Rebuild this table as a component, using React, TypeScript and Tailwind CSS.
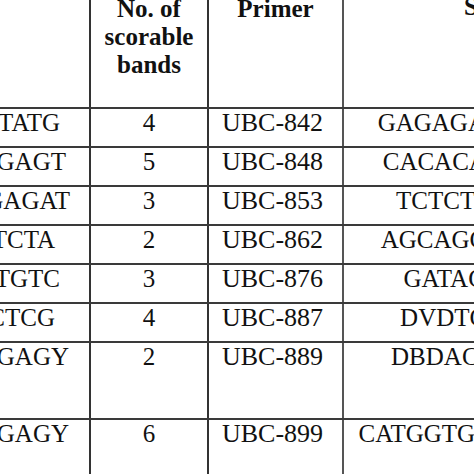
const ROWS = [
  { left: "GTATG", pr: "pr-[29px]", bands: "4", primer: "UBC-842", seq: "GAGAGAGAGAGAGAGAYG", tall: false },
  { left: "AGAGT", pr: "pr-[23px]", bands: "5", primer: "UBC-848", seq: "CACACACACACACACARG", tall: false },
  { left: "AGAGAT", pr: "pr-[19px]", bands: "3", primer: "UBC-853", seq: "TCTCTCTCTCTCTCTCRT", tall: false },
  { left: "CTCTA", pr: "pr-[34px]", bands: "2", primer: "UBC-862", seq: "AGCAGCAGCAGCAGCAGC", tall: false },
  { left: "GTGTC", pr: "pr-[29px]", bands: "3", primer: "UBC-876", seq: "GATAGATAGACAGACA", tall: false },
  { left: "TCTCG", pr: "pr-[34px]", bands: "4", primer: "UBC-887", seq: "DVDTCTCTCTCTCTCTC", tall: false },
  { left: "GAGAGY", pr: "pr-[20px]", bands: "2", primer: "UBC-889", seq: "DBDACACACACACACAC", tall: true },
  { left: "GAGAGY", pr: "pr-[20px]", bands: "6", primer: "UBC-899", seq: "CATGGTGTTGGTCATTGTTCCA", tall: true },
]

export default function App() {
  return (
    <div
      className="h-[474px] w-[474px] overflow-hidden bg-white text-[25px] leading-[28px] text-[#111]"
      style={{ fontFamily: '"Liberation Serif", "Times New Roman", serif' }}>
      <div className="w-[736px]">
        {/* Header */}
        <div className="flex h-[107px] font-bold">
          <div className="w-[91px] shrink-0 border-r-2 border-[#333]" />
          <div className="w-[118px] shrink-0 border-r-2 border-[#333] text-center">
            <div className="-mt-[5px]">
              No. of
              <br />
              scorable
              <br />
              bands
            </div>
          </div>
          <div className="w-[135px] shrink-0 border-r-2 border-[#555] text-center">
            <div className="-mt-[5px]">Primer</div>
          </div>
          <div className="w-[390px] shrink-0 pl-[20px] text-center">
            <div className="-mt-[7px] whitespace-nowrap">Sequence (5'-3')</div>
          </div>
        </div>

        {/* Body rows */}
        {ROWS.map((row) => (
          <div
            key={row.primer}
            className={`flex border-t-2 border-[#3a3a3a] ${row.tall ? "h-[77px]" : "h-[39px]"}`}>
            <div
              className={`flex w-[91px] shrink-0 justify-end overflow-hidden whitespace-nowrap border-r-2 border-[#333] ${row.pr}`}>
              {row.left}
            </div>
            <div className="w-[118px] shrink-0 border-r-2 border-[#333] text-center">
              {row.bands}
            </div>
            <div className="w-[135px] shrink-0 whitespace-nowrap border-r-2 border-[#555] pr-[6px] text-center text-[26px]">
              {row.primer}
            </div>
            <div className="w-[390px] shrink-0 whitespace-nowrap text-center">{row.seq}</div>
          </div>
        ))}
      </div>
    </div>
  )
}
